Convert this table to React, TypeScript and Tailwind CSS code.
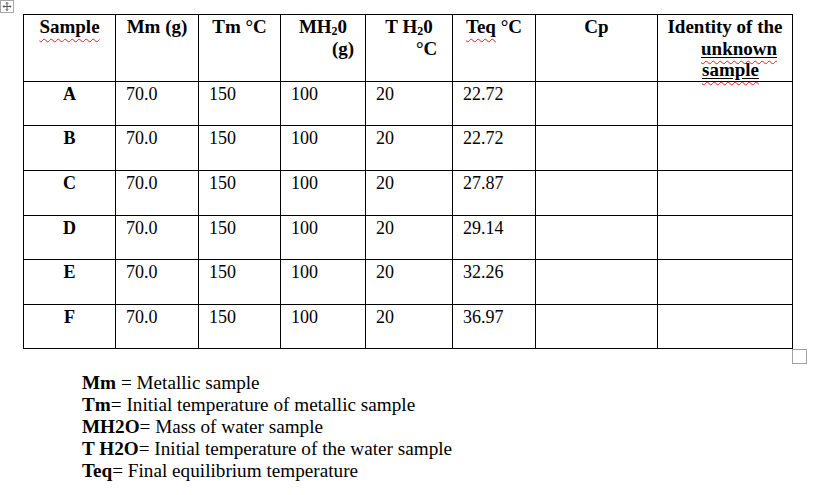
import React from "react";

type Row = { id: string; mm: string; tm: string; mh2o: string; th2o: string; teq: string };

const rows: Row[] = [
  { id: "A", mm: "70.0", tm: "150", mh2o: "100", th2o: "20", teq: "22.72" },
  { id: "B", mm: "70.0", tm: "150", mh2o: "100", th2o: "20", teq: "22.72" },
  { id: "C", mm: "70.0", tm: "150", mh2o: "100", th2o: "20", teq: "27.87" },
  { id: "D", mm: "70.0", tm: "150", mh2o: "100", th2o: "20", teq: "29.14" },
  { id: "E", mm: "70.0", tm: "150", mh2o: "100", th2o: "20", teq: "32.26" },
  { id: "F", mm: "70.0", tm: "150", mh2o: "100", th2o: "20", teq: "36.97" },
];

const rowHeights = ["h-[44px]", "h-[45px]", "h-[45px]", "h-[44px]", "h-[45px]", "h-[44px]"];

// red spell-check squiggle
function Squiggle({ children }: { children: React.ReactNode }) {
  return (
    <span className="underline decoration-wavy decoration-[#d22] decoration-1 underline-offset-[5px]">
      {children}
    </span>
  );
}

function MoveHandle() {
  return (
    <div className="absolute left-0 top-0 w-[14px] h-[13px] border border-[#a6a6a6] bg-white">
      <svg viewBox="0 0 12 11" className="w-full h-full" fill="none" stroke="#555" strokeWidth="1">
        <path d="M6 1.5v8M2 5.5h8" />
        <path d="M4.8 2.7L6 1.5l1.2 1.2M4.8 8.3L6 9.5l1.2-1.2M3.2 4.3L2 5.5l1.2 1.2M8.8 4.3L10 5.5 8.8 6.7" />
      </svg>
    </div>
  );
}

const th = "border border-black align-top px-0 pt-[1px] font-bold text-[19px] leading-[21.5px]";
const td = "border border-black align-top pt-[1px] pl-[10px] text-left font-normal";
const sub = "text-[12px] bottom-[-2px]";

export default function App() {
  return (
    <main className="min-h-screen bg-white text-black font-['Liberation_Serif','Times_New_Roman',serif] text-[18px] leading-[22px]">
      <div className="relative pl-[23px] pt-[14px] w-fit">
        <MoveHandle />
        <table className="table-fixed border-collapse w-[769px]">
          <colgroup>
            <col className="w-[92px]" />
            <col className="w-[83px]" />
            <col className="w-[82px]" />
            <col className="w-[85px]" />
            <col className="w-[87px]" />
            <col className="w-[83px]" />
            <col className="w-[122px]" />
            <col className="w-[135px]" />
          </colgroup>
          <thead>
            <tr className="h-[67px]">
              <th className={`${th} text-center`}>
                <Squiggle>Sample</Squiggle>
              </th>
              <th className={`${th} text-center`}>Mm (g)</th>
              <th className={`${th} text-center`}>Tm °C</th>
              <th className={`${th} text-left`}>
                <div className="text-center">
                  MH<sub className={sub}>2</sub>0
                </div>
                <div className="pl-[51px]">(g)</div>
              </th>
              <th className={`${th} text-left`}>
                <div className="text-center">
                  T H<sub className={sub}>2</sub>0
                </div>
                <div className="pl-[50px]">°C</div>
              </th>
              <th className={`${th} text-center`}>
                <Squiggle>Teq</Squiggle> °C
              </th>
              <th className={`${th} text-center`}>Cp</th>
              <th className={`${th} text-left`}>
                <div className="text-center">Identity of the</div>
                <div className="pl-[43px]">
                  <span className="underline underline-offset-[2px]">
                    <Squiggle>unknown</Squiggle>
                  </span>
                </div>
                <div className="pl-[44px]">
                  <span className="underline underline-offset-[2px]">
                    <Squiggle>sample</Squiggle>
                  </span>
                </div>
              </th>
            </tr>
          </thead>
          <tbody>
            {rows.map((r, i) => (
              <tr key={r.id} className={rowHeights[i]}>
                <td className="border border-black align-top pt-[1px] text-center font-bold">{r.id}</td>
                <td className={td}>{r.mm}</td>
                <td className={td}>{r.tm}</td>
                <td className={td}>{r.mh2o}</td>
                <td className={td}>{r.th2o}</td>
                <td className={td}>{r.teq}</td>
                <td className={td}></td>
                <td className={td}></td>
              </tr>
            ))}
          </tbody>
        </table>
        <div className="absolute left-[792px] top-[349px] w-[15px] h-[15px] border border-[#a0a0a0] bg-white" />
      </div>

      <div className="pl-[82px] pt-[23px] text-[19.2px]">
        <p>
          <b>Mm</b> = Metallic sample
        </p>
        <p>
          <b>Tm</b>= Initial temperature of metallic sample
        </p>
        <p>
          <b>MH2O</b>= Mass of water sample
        </p>
        <p>
          <b>T H2O</b>= Initial temperature of the water sample
        </p>
        <p>
          <b>Teq</b>= Final equilibrium temperature
        </p>
      </div>
    </main>
  );
}
